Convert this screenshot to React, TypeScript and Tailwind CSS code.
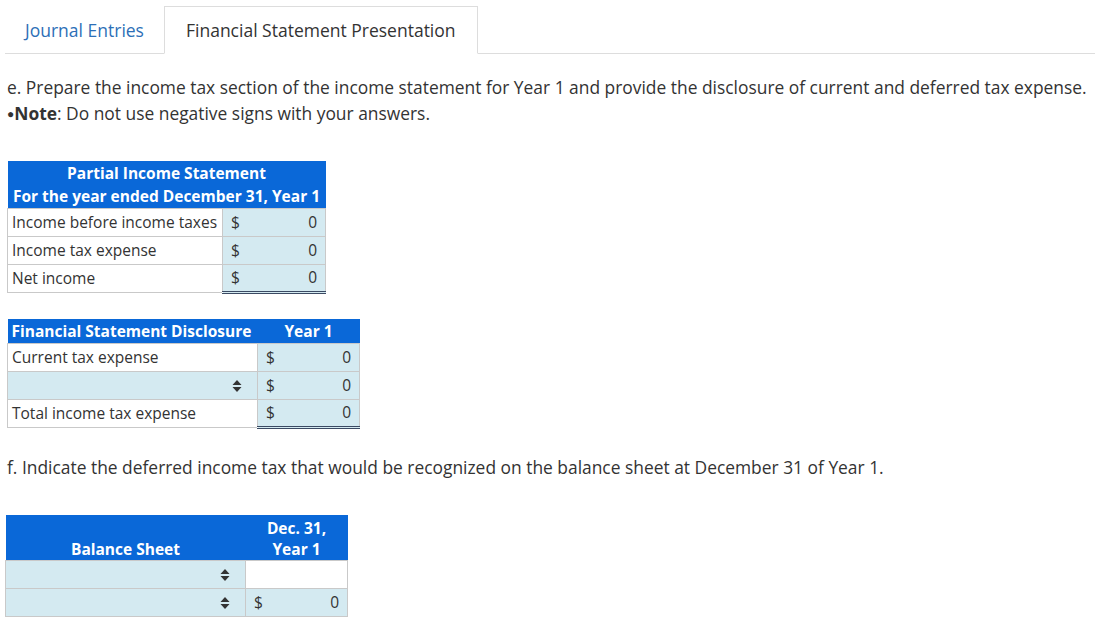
import React from 'react';

const font = { fontFamily: '"Open Sans", "Liberation Sans", sans-serif' };

// up/down selector glyph used by the dropdown cells
const SortArrows: React.FC = () => (
    <svg width="10" height="14" viewBox="0 0 10 14" className="text-[#333]">
        <path d="M5 1 L9.5 6 H0.5 Z" fill="currentColor" />
        <path d="M5 13 L9.5 8 H0.5 Z" fill="currentColor" />
    </svg>
);

const Money: React.FC<{ value?: string }> = ({ value = '0' }) => (
    <div className="flex items-center justify-between px-2">
        <span>$</span>
        <span>{value}</span>
    </div>
);

const Tabs: React.FC = () => (
    <div className="flex items-end ml-[5px] border-b border-[#dddddd] pt-[6px]">
        <div className="px-5 h-[47px] pt-px flex items-center text-[17.5px] text-[#2d6fb7]">Journal Entries</div>
        <div className="px-[21px] h-[48px] -mb-px flex items-center text-[17.5px] text-[#333] bg-white border border-[#dddddd] border-b-white">
            Financial Statement Presentation
        </div>
    </div>
);

const App: React.FC = () => {
    const cell = 'border border-[#c9c9c9] h-[28px] p-0';
    const blue = 'bg-[#d4eaf1]';

    return (
        <div className="bg-white min-h-[636px] text-[#333]" style={font}>
            <Tabs />

            <div className="px-[7px] pt-[20px] text-[17.4px] leading-[26px]">
                <p>e. Prepare the income tax section of the income statement for Year 1 and provide the disclosure of current and deferred tax expense.</p>
                <p><span className="text-[12px] align-[2px]">●</span><strong>Note</strong>: Do not use negative signs with your answers.</p>
            </div>

            {/* Partial income statement */}
            <table className="ml-[7px] mt-[34px] border-collapse text-[15.5px]">
                <thead>
                    <tr>
                        <th colSpan={2} className="bg-[#0a68d8] text-white font-bold leading-[23px] pt-px pb-0 px-1 text-center w-[318px]">
                            Partial Income Statement<br />For the year ended December 31, Year 1
                        </th>
                    </tr>
                </thead>
                <tbody>
                    <tr>
                        <td className={`${cell} px-[4px] w-[215px]`}>Income before income taxes</td>
                        <td className={`${cell} ${blue}`}><Money /></td>
                    </tr>
                    <tr>
                        <td className={`${cell} px-[4px]`}>Income tax expense</td>
                        <td className={`${cell} ${blue} border-b-[#222]`}><Money /></td>
                    </tr>
                    <tr>
                        <td className={`${cell} px-[4px]`}>Net income</td>
                        <td className={`${cell} ${blue} border-b-[3px] border-b-[#3b4a63] border-double`}><Money /></td>
                    </tr>
                </tbody>
            </table>

            {/* Disclosure */}
            <table className="ml-[7px] mt-[25px] border-collapse text-[15.5px]">
                <thead>
                    <tr className="bg-[#0a68d8] text-white font-bold">
                        <th className="h-[23px] pt-px pb-0 px-[4px] text-left w-[250px] leading-[23px]">Financial Statement Disclosure</th>
                        <th className="h-[23px] pt-px pb-0 text-center w-[102px] leading-[23px]">Year 1</th>
                    </tr>
                </thead>
                <tbody>
                    <tr>
                        <td className={`${cell} px-[4px]`}>Current tax expense</td>
                        <td className={`${cell} ${blue}`}><Money /></td>
                    </tr>
                    <tr>
                        <td className={`${cell} ${blue}`}>
                            <div className="flex justify-end pr-[15px]"><SortArrows /></div>
                        </td>
                        <td className={`${cell} ${blue} border-b-[#222]`}><Money /></td>
                    </tr>
                    <tr>
                        <td className={`${cell} px-[4px]`}>Total income tax expense</td>
                        <td className={`${cell} ${blue} border-b-[3px] border-b-[#3b4a63] border-double`}><Money /></td>
                    </tr>
                </tbody>
            </table>

            <p className="px-[7px] mt-[25px] text-[17.4px] leading-[26px]">
                f. Indicate the deferred income tax that would be recognized on the balance sheet at December 31 of Year 1.
            </p>

            {/* Balance sheet */}
            <table className="ml-[5px] mt-[35px] border-collapse text-[15.5px]">
                <thead>
                    <tr className="bg-[#0a68d8] text-white font-bold">
                        <th className="h-[45px] pt-[3px] pb-0 px-1 text-center align-bottom w-[240px] leading-[21px]">Balance Sheet</th>
                        <th className="h-[45px] pt-[3px] pb-0 px-1 text-center align-bottom w-[102px] leading-[21px]">Dec. 31,<br />Year 1</th>
                    </tr>
                </thead>
                <tbody>
                    <tr>
                        <td className={`${cell} ${blue}`}>
                            <div className="flex justify-end pr-[15px]"><SortArrows /></div>
                        </td>
                        <td className={`${cell} bg-white`}></td>
                    </tr>
                    <tr>
                        <td className={`${cell} ${blue}`}>
                            <div className="flex justify-end pr-[15px]"><SortArrows /></div>
                        </td>
                        <td className={`${cell} ${blue}`}><Money /></td>
                    </tr>
                </tbody>
            </table>
        </div>
    );
};

export default App;
